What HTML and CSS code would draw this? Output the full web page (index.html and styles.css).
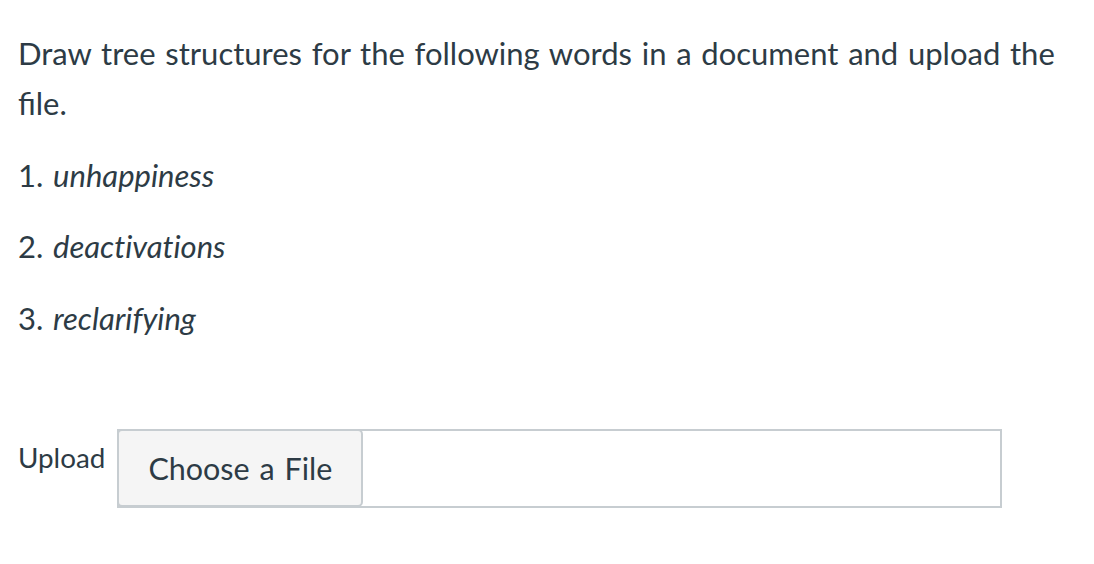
FILE: index.html
```html
<!DOCTYPE html>
<html>
<head>
<meta charset="utf-8">
<link rel="stylesheet" href="styles.css">
</head>
<body>
<div class="content">
  <p class="para">Draw tree structures for the following words in a document and upload the ﬁle.</p>
  <p class="para">1. <em>unhappiness</em></p>
  <p class="para">2. <em>deactivations</em></p>
  <p class="para">3. <em>reclarifying</em></p>
</div>
<div class="upload">
  <label class="upload-label">Upload</label>
  <div class="file-box">
    <button class="file-btn">Choose a File</button>
  </div>
</div>
</body>
</html>
```
FILE: styles.css
```css
html, body {
  margin: 0;
  padding: 0;
  background: #ffffff;
}
body {
  font-family: Lato, "Noto Sans", sans-serif;
  color: #2D3B45;
  font-variant-ligatures: no-common-ligatures;
}
.content {
  padding: 28px 18px 0 18px;
  width: 1052px;
}
.para {
  margin: 0 0 21.5px 0;
  font-size: 31px;
  line-height: 50px;
  word-spacing: 1.8px;
}
.para em {
  font-style: italic;
}
.upload {
  display: flex;
  align-items: flex-start;
  padding: 65px 0 0 18px;
  gap: 12px;
}
.upload-label {
  font-size: 27.8px;
  line-height: 30px;
  padding-top: 14px;
}
.file-box {
  width: 881px;
  height: 75px;
  border: 2px solid #C7CDD1;
  display: flex;
}
.file-btn {
  margin: -2px 0 -1px -2px;
  width: 246px;
  height: 78px;
  background: #F5F5F5;
  border: 2px solid #C7CDD1;
  border-radius: 5px;
  font-family: Lato, "Noto Sans", sans-serif;
  font-variant-ligatures: no-common-ligatures;
  font-size: 30.5px;
  word-spacing: 2px;
  color: #2D3B45;
  padding: 0;
}
```
